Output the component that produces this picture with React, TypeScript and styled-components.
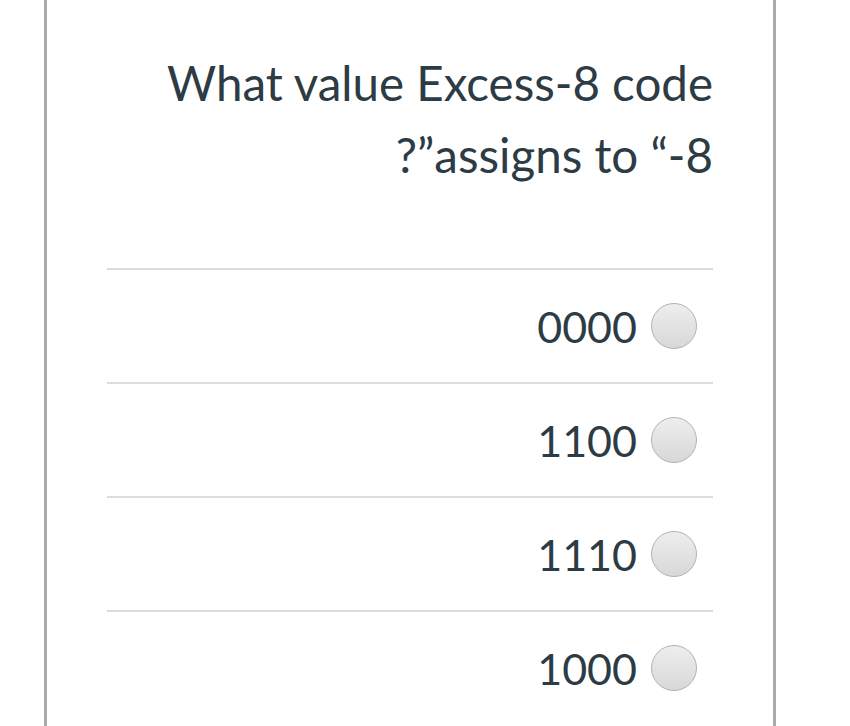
import React from "react";
import styled, { createGlobalStyle } from "styled-components";

const Global = createGlobalStyle`
  html, body { margin: 0; padding: 0; background: #ffffff; }
  body { font-family: Lato, "Open Sans", sans-serif; color: #2d3b45; }
`;

const Page = styled.div`
  width: 850px;
  height: 726px;
  overflow: hidden;
  display: flex;
  background: #ffffff;
`;

const Card = styled.div`
  margin-left: 44px;
  width: 732px;
  box-sizing: border-box;
  border-left: 3px solid #ababab;
  border-right: 3px solid #ababab;
  padding: 47px 60px 0;
  min-height: 726px;
`;

const Question = styled.div`
  direction: rtl;
  text-align: right;
  font-size: 47.5px;
  line-height: 72px;
  color: #2d3b45;
  margin-bottom: 77px;
`;

const Answers = styled.div`
  display: flex;
  flex-direction: column;
`;

const Row = styled.label`
  direction: rtl;
  display: flex;
  align-items: center;
  gap: 14px;
  height: 112px;
  padding-right: 16px;
  border-top: 2px solid #dcdcdc;
`;

const Radio = styled.span`
  width: 46px;
  height: 46px;
  box-sizing: border-box;
  border-radius: 50%;
  border: 1px solid #b2b2b2;
  background: linear-gradient(#eeeeee, #d8d8d8);
  flex: none;
`;

const OptionText = styled.span`
  font-size: 43px;
  color: #2d3b45;
`;

const options = ["0000", "1100", "1110", "1000"];

export default function App() {
  return (
    <Page>
      <Global />
      <Card>
        <Question>What value Excess-8 code assigns to “-8”?</Question>
        <Answers>
          {options.map((o) => (
            <Row key={o}>
              <Radio />
              <OptionText>{o}</OptionText>
            </Row>
          ))}
        </Answers>
      </Card>
    </Page>
  );
}
